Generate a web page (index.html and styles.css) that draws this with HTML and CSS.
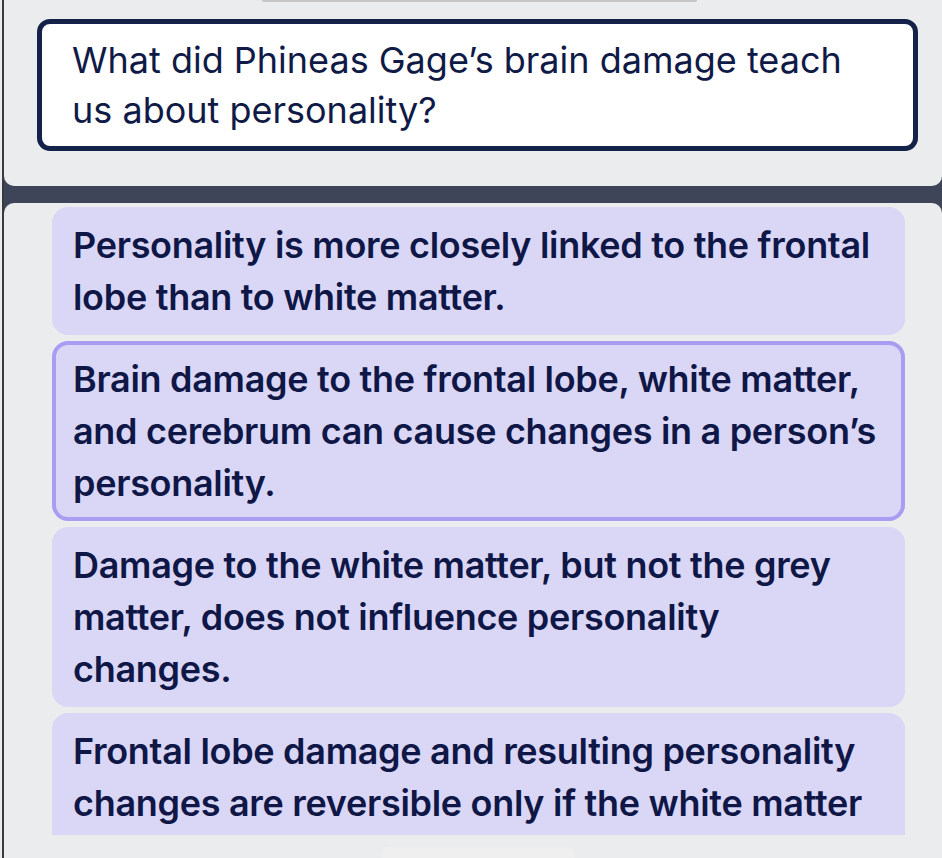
FILE: index.html
```html
<!DOCTYPE html>
<html lang="en">
<head>
  <meta charset="UTF-8" />
  <meta name="viewport" content="width=device-width, initial-scale=1.0"/>
  <title>Quiz</title>
  <link rel="stylesheet" href="styles.css">
</head>
<body>

  <div class="frame">
    <!-- Question -->
    <div class="top-panel">
      <div class="handle"></div>
      <div class="question-card">
        What did Phineas Gage’s brain damage teach us about personality?
      </div>
    </div>

    <!-- Answers -->
    <div class="bottom-panel">
      <div class="answers">
        <div class="answer">Personality is more closely linked to the frontal lobe than to white matter.</div>
        <div class="answer selected">Brain damage to the frontal lobe, white matter, and cerebrum can cause changes in a person’s personality.</div>
        <div class="answer">Damage to the white matter, but not the grey matter, does not influence personality changes.</div>
        <div class="answer">Frontal lobe damage and resulting personality changes are reversible only if the white matter is repaired.</div>
      </div>
      <div class="footer">
        <div class="footer-tab"></div>
      </div>
    </div>
  </div>

</body>
</html>
```

FILE: styles.css
```css
body {
  margin: 0;
  font-family: Inter, "Noto Sans", sans-serif;
  background-color: #ebecee;
  overflow: hidden;
}

.frame {
  margin-left: 2px;
  border-left: 2px solid #3b3b3b;
  height: 858px;
  background-color: #3e4558;
  display: flex;
  flex-direction: column;
  box-sizing: border-box;
}

/* Top panel with the question */
.top-panel {
  position: relative;
  background-color: #ebecee;
  height: 186px;
  border-radius: 0 0 10px 10px;
  padding: 19px 24px 0 33px;
  box-sizing: border-box;
}

.handle {
  position: absolute;
  top: 0;
  left: 258px;
  width: 435px;
  height: 2px;
  background-color: #c5c5c5;
  border-radius: 0 0 3px 3px;
}

.question-card {
  background-color: white;
  border: 5px solid #14224a;
  border-radius: 13px;
  padding: 11px 30px;
  font-size: 36px;
  line-height: 50px;
  font-weight: 400;
  color: #101a46;
}

/* Bottom panel with the answers */
.bottom-panel {
  flex: 1;
  margin-top: 17px;
  background-color: #ebecee;
  border-radius: 10px 10px 0 0;
  display: flex;
  flex-direction: column;
  min-height: 0;
}

.answers {
  height: 628px;
  overflow: hidden;
  padding: 4px 37px 0 48px;
  display: flex;
  flex-direction: column;
  gap: 6px;
}

.answer {
  flex-shrink: 0;
  background-color: #dad6f6;
  border-radius: 16px;
  padding: 12px 21px;
  font-size: 36px;
  line-height: 52px;
  font-weight: 600;
  letter-spacing: -0.3px;
  color: #0f1747;
}

.answer.selected {
  border: 4px solid #a89df3;
  padding: 8px 17px;
}

.footer {
  flex: 1;
  display: flex;
  align-items: flex-end;
}

.footer-tab {
  width: 194px;
  height: 11px;
  margin-left: 377px;
  background-color: #efeff0;
  border-radius: 8px 8px 0 0;
}
```
